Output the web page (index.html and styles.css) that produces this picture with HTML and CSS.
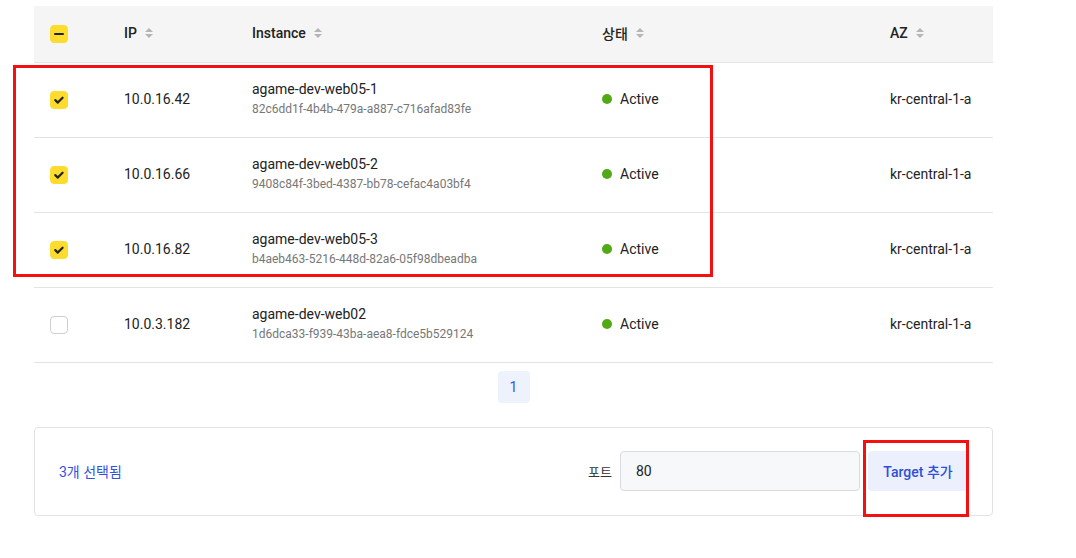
FILE: index.html
```html
<!DOCTYPE html>
<html lang="ko">
<head>
    <meta charset="UTF-8">
    <title>Target 추가</title>
    <link rel="stylesheet" href="styles.css">
</head>
<body>
    <div class="wrap">
        <table class="target-table">
            <colgroup>
                <col class="col-check">
                <col class="col-ip">
                <col class="col-instance">
                <col class="col-status">
                <col class="col-az">
            </colgroup>
            <thead>
                <tr>
                    <th class="cell-check"><span class="checkbox partial"><span class="dash"></span></span></th>
                    <th><span class="th-label">IP <span class="sort"></span></span></th>
                    <th><span class="th-label">Instance <span class="sort"></span></span></th>
                    <th><span class="th-label">상태 <span class="sort"></span></span></th>
                    <th><span class="th-label">AZ <span class="sort"></span></span></th>
                </tr>
            </thead>
            <tbody>
                <tr>
                    <td class="cell-check"><span class="checkbox checked"><svg viewBox="0 0 18 18"><path d="M5.3 9.1l2.5 2.5 4.8-4.9" /></svg></span></td>
                    <td>10.0.16.42</td>
                    <td><div class="inst-name">agame-dev-web05-1</div><div class="inst-id">82c6dd1f-4b4b-479a-a887-c716afad83fe</div></td>
                    <td><span class="status"><span class="dot"></span>Active</span></td>
                    <td>kr-central-1-a</td>
                </tr>
                <tr>
                    <td class="cell-check"><span class="checkbox checked"><svg viewBox="0 0 18 18"><path d="M5.3 9.1l2.5 2.5 4.8-4.9" /></svg></span></td>
                    <td>10.0.16.66</td>
                    <td><div class="inst-name">agame-dev-web05-2</div><div class="inst-id">9408c84f-3bed-4387-bb78-cefac4a03bf4</div></td>
                    <td><span class="status"><span class="dot"></span>Active</span></td>
                    <td>kr-central-1-a</td>
                </tr>
                <tr>
                    <td class="cell-check"><span class="checkbox checked"><svg viewBox="0 0 18 18"><path d="M5.3 9.1l2.5 2.5 4.8-4.9" /></svg></span></td>
                    <td>10.0.16.82</td>
                    <td><div class="inst-name">agame-dev-web05-3</div><div class="inst-id">b4aeb463-5216-448d-82a6-05f98dbeadba</div></td>
                    <td><span class="status"><span class="dot"></span>Active</span></td>
                    <td>kr-central-1-a</td>
                </tr>
                <tr>
                    <td class="cell-check"><span class="checkbox"></span></td>
                    <td>10.0.3.182</td>
                    <td><div class="inst-name">agame-dev-web02</div><div class="inst-id">1d6dca33-f939-43ba-aea8-fdce5b529124</div></td>
                    <td><span class="status"><span class="dot"></span>Active</span></td>
                    <td>kr-central-1-a</td>
                </tr>
            </tbody>
        </table>

        <div class="pagination">
            <button class="page-btn">1</button>
        </div>

        <div class="action-bar">
            <span class="selected-count">3개 선택됨</span>
            <div class="port-group">
                <label class="port-label" for="port">포트</label>
                <input id="port" class="port-input" type="text" value="80">
                <button class="add-button">Target 추가</button>
            </div>
        </div>
    </div>

    <!-- 강조 표시 -->
    <div class="highlight rows-mark"></div>
    <div class="highlight button-mark"></div>
</body>
</html>
```

FILE: styles.css
```css
* {
    box-sizing: border-box;
    margin: 0;
    padding: 0;
}

body {
    font-family: Roboto, 'Noto Sans CJK KR', sans-serif;
    font-size: 14px;
    color: #222;
    background: #fff;
    position: relative;
    min-height: 558px;
}

.wrap {
    width: 959px;
    margin-left: 34px;
    padding-top: 6px;
}

.target-table {
    width: 100%;
    border-collapse: collapse;
    table-layout: fixed;
}

.col-check { width: 90px; }
.col-ip { width: 128px; }
.col-instance { width: 350px; }
.col-status { width: 288px; }
.col-az { width: 103px; }

th, td {
    text-align: left;
    vertical-align: middle;
    padding: 0;
    border-bottom: 1px solid #e4e4e4;
}

thead th {
    height: 56px;
    padding-bottom: 2px;
    background: #f5f5f5;
    font-weight: 500;
    color: #222;
}

tbody td {
    height: 75px;
    padding-bottom: 2px;
}

.cell-check {
    padding-left: 16px;
}

thead .cell-check,
tbody .cell-check {
    padding-bottom: 0;
}

.th-label {
    display: inline-flex;
    align-items: center;
    gap: 2px;
}

.sort {
    display: inline-flex;
    flex-direction: column;
    gap: 2px;
    margin-left: 6px;
}

.sort::before,
.sort::after {
    content: '';
    width: 0;
    height: 0;
    border-left: 4px solid transparent;
    border-right: 4px solid transparent;
}

.sort::before {
    border-bottom: 4px solid #b5b5b5;
}

.sort::after {
    border-top: 4px solid #b5b5b5;
}

.checkbox {
    display: flex;
    align-items: center;
    justify-content: center;
    width: 18px;
    height: 18px;
    border-radius: 4px;
    border: 1px solid #cfcfcf;
    background: #fff;
}

.checkbox.checked,
.checkbox.partial {
    background: #fddc2e;
    border-color: #fddc2e;
}

.checkbox svg {
    width: 18px;
    height: 18px;
    flex: none;
}

.checkbox path {
    fill: none;
    stroke: #222;
    stroke-width: 2.2;
    stroke-linecap: round;
    stroke-linejoin: round;
}

.dash {
    width: 10px;
    height: 2px;
    background: #222;
    border-radius: 1px;
}

.inst-name {
    font-size: 14px;
    color: #222;
}

.inst-id {
    font-size: 12px;
    color: #777;
    margin-top: 5px;
}

.status {
    display: inline-flex;
    align-items: center;
    gap: 8px;
    margin-top: -2px;
}

.dot {
    width: 10px;
    height: 10px;
    border-radius: 50%;
    background: #52a916;
}

.pagination {
    display: flex;
    justify-content: center;
    padding: 8px 0 24px;
}

.page-btn {
    width: 32px;
    height: 32px;
    border: none;
    border-radius: 4px;
    background: #edf2fc;
    color: #2f54eb;
    font-family: Roboto, sans-serif;
    font-size: 14px;
}

.action-bar {
    height: 89px;
    border: 1px solid #e3e3e3;
    border-radius: 4px;
    display: flex;
    align-items: center;
    justify-content: space-between;
    padding: 0 24px 0 24px;
}

.selected-count {
    color: #3152e0;
    font-size: 14px;
}

.port-group {
    display: flex;
    align-items: center;
    gap: 8px;
}

.port-label {
    font-size: 13px;
    color: #333;
}

.port-input {
    width: 240px;
    height: 40px;
    border: 1px solid #d8dbe2;
    border-radius: 4px;
    background: #f7f8fa;
    padding: 0 15px;
    font-family: Roboto, sans-serif;
    font-size: 14px;
    color: #222;
    outline: none;
}

.add-button {
    width: 100px;
    height: 40px;
    border: none;
    border-radius: 4px;
    background: #ecf0fc;
    color: #2f4fd8;
    font-family: Roboto, 'Noto Sans CJK KR', sans-serif;
    font-size: 14px;
    font-weight: 500;
}

.highlight {
    position: absolute;
    border: 3px solid #f41010;
    pointer-events: none;
}

.rows-mark {
    left: 13px;
    top: 65px;
    width: 700px;
    height: 212px;
}

.button-mark {
    left: 863px;
    top: 440px;
    width: 106px;
    height: 77px;
}
```
